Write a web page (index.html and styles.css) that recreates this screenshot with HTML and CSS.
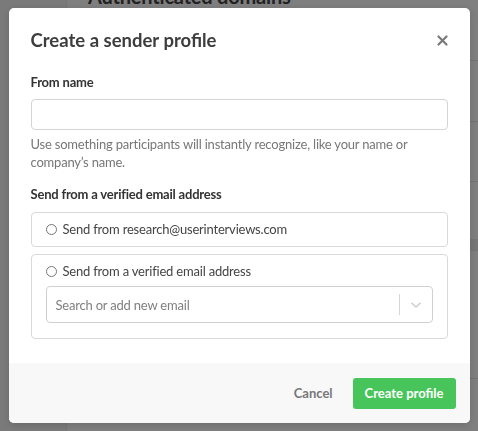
FILE: index.html
```html
<!DOCTYPE html>
<html lang="en">
<head>
<meta charset="utf-8">
<title>Create a sender profile</title>
<link rel="stylesheet" href="styles.css">
</head>
<body>
<div class="page">
  <aside class="sidebar"></aside>
  <main class="main">
    <h2 class="page-title">Authenticated domains</h2>
    <div class="row r1"></div>
    <div class="row r2"></div>
    <div class="row r3"></div>
    <div class="spacer s1"></div>
    <div class="band"></div>
    <div class="spacer s2"></div>
    <div class="row r4"></div>
  </main>
</div>
<div class="overlay">
  <div class="modal" role="dialog">
    <div class="modal-body">
      <div class="modal-head">
        <h1 class="modal-title">Create a sender profile</h1>
        <button class="close" aria-label="Close">
          <svg width="11" height="11" viewBox="0 0 11 11"><path d="M1.5 1.5l8 8M9.5 1.5l-8 8" stroke="#7a7a7a" stroke-width="2.2" stroke-linecap="round"/></svg>
        </button>
      </div>
      <label class="label">From name</label>
      <input class="text-input" type="text">
      <p class="help">Use something participants will instantly recognize, like your name or company’s name.</p>
      <div class="label label-gap">Send from a verified email address</div>
      <div class="option">
        <label class="radio-row"><span class="radio"></span>Send from research@userinterviews.com</label>
      </div>
      <div class="option option-2">
        <label class="radio-row"><span class="radio"></span>Send from a verified email address</label>
        <div class="select">
          <span class="placeholder">Search or add new email</span>
          <span class="sep"></span>
          <span class="chev">
            <svg width="12" height="8" viewBox="0 0 12 8"><path d="M1.5 1.8l4.5 4.2 4.5-4.2" fill="none" stroke="#cfcfcf" stroke-width="1.6"/></svg>
          </span>
        </div>
      </div>
    </div>
    <div class="modal-foot">
      <button class="btn-cancel">Cancel</button>
      <button class="btn-primary">Create profile</button>
    </div>
  </div>
</div>
</body>
</html>
```

FILE: styles.css
```css
* { box-sizing: border-box; }
html, body { margin: 0; padding: 0; }
body {
  font-family: "Lato", "Liberation Sans", sans-serif;
  letter-spacing: -0.2px;
  background: #ffffff;
  width: 478px;
  height: 431px;
  overflow: hidden;
}
.page {
  display: flex;
  height: 431px;
}
.sidebar {
  width: 67px;
  background: #f4f4f4;
  border-right: 1px solid #ececec;
}
.main {
  flex: 1;
  padding-left: 21px;
}
.page-title {
  margin: -18px 0 0 0;
  font-size: 20px;
  font-weight: 700;
  line-height: 28px;
  color: #444;
}
.row { border-bottom: 1px solid #e6e6e6; }
.r1 { height: 51px; }
.r2 { height: 61px; }
.r3 { height: 60px; }
.s1 { height: 57px; }
.band { height: 12px; background: #ececec; }
.s2 { height: 127px; }
.r4 { height: 1px; }

.overlay {
  position: fixed;
  inset: 0;
  background: rgba(0, 0, 0, 0.5);
  display: flex;
  align-items: center;
  justify-content: center;
}
.modal {
  width: 461px;
  height: 415px;
  background: #fff;
  border-radius: 5px;
  overflow: hidden;
  display: flex;
  flex-direction: column;
  box-shadow: 0 2px 8px rgba(0,0,0,0.15);
}
.modal-body {
  flex: 1;
  padding: 20px 22px 0 22px;
  display: flex;
  flex-direction: column;
}
.modal-head {
  display: flex;
  align-items: center;
  justify-content: space-between;
  margin-bottom: 21px;
}
.modal-title {
  margin: 0;
  font-size: 18.5px;
  line-height: 24px;
  font-weight: 700;
  letter-spacing: 0;
  color: #3d3d3d;
}
.close {
  border: 0;
  background: none;
  padding: 0;
  margin-right: 0;
  width: 11px;
  height: 11px;
  display: flex;
  cursor: pointer;
}
.label {
  display: block;
  font-size: 13px;
  line-height: 18px;
  font-weight: 700;
  color: #333;
}
.label-gap { margin-top: 14px; }
.text-input {
  margin-top: 8px;
  height: 31px;
  width: 100%;
  border: 1px solid #d4d4d4;
  border-radius: 4px;
  font: inherit;
}
.help {
  margin: 5px 0 0 0;
  font-size: 13px;
  line-height: 18px;
  color: #777;
}
.option {
  margin-top: 9px;
  border: 1px solid #d9d9d9;
  border-radius: 4px;
  padding: 7px 14px 8px 14px;
}
.option-2 {
  margin-top: 7px;
  padding-bottom: 15px;
}
.radio-row {
  display: flex;
  align-items: center;
  font-size: 13px;
  line-height: 18px;
  color: #444;
}
.radio {
  width: 11px;
  height: 11px;
  border: 1px solid #777;
  border-radius: 50%;
  margin: 0 6px 0 0;
  flex: none;
}
.select {
  margin-top: 6px;
  height: 37px;
  border: 1px solid #d0d0d0;
  border-radius: 4px;
  display: flex;
  align-items: center;
  padding-left: 9px;
}
.placeholder {
  flex: 1;
  font-size: 13px;
  color: #808080;
}
.sep {
  width: 1px;
  height: 21px;
  background: #d6d6d6;
}
.chev {
  width: 32px;
  display: flex;
  justify-content: center;
  align-items: center;
}
.modal-foot {
  height: 60px;
  background: #f8f8f8;
  display: flex;
  align-items: center;
  justify-content: flex-end;
  padding-right: 14px;
  gap: 20px;
}
.btn-cancel {
  border: 0;
  background: none;
  padding: 0;
  font: inherit;
  font-size: 13px;
  font-weight: 700;
  color: #777;
}
.btn-primary {
  border: 0;
  height: 31px;
  padding: 0 12px;
  border-radius: 3px;
  background: #48c55a;
  color: #fff;
  font: inherit;
  font-size: 13px;
  font-weight: 700;
}
```
